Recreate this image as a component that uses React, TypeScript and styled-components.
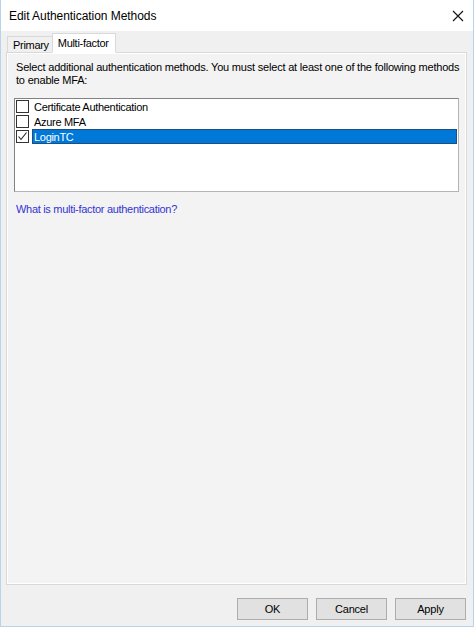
import React from "react";
import styled, { createGlobalStyle } from "styled-components";

const Global = createGlobalStyle`
  html, body { margin: 0; padding: 0; background: #ffffff; }
  body { font-family: "Liberation Sans", Arial, sans-serif; }
  #root { width: 474px; height: 627px; }
`;

const Window = styled.div`
  box-sizing: border-box;
  width: 474px;
  height: 627px;
  display: flex;
  flex-direction: column;
  background: #f0f0f0;
  border: 1px solid #b9d3ec;
  border-top: none;
  font-family: "Liberation Sans", Arial, sans-serif;
  color: #000;
`;

const TitleBar = styled.div`
  height: 31px;
  flex: none;
  background: #ffffff;
  display: flex;
  align-items: center;
  justify-content: space-between;
  padding: 1px 9px 0 8px;
  box-sizing: border-box;
`;

const Title = styled.span`
  font-size: 12px;
  color: #000;
  letter-spacing: -0.05px;
`;

const CloseBtn = styled.span`
  width: 12px;
  height: 12px;
  display: flex;
  align-items: center;
  justify-content: center;
`;

const Body = styled.div`
  flex: 1;
  display: flex;
  flex-direction: column;
  padding: 2px 6px 6px 5px;
  min-height: 0;
`;

const TabRow = styled.div`
  display: flex;
  align-items: flex-end;
  height: 20px;
  padding-left: 1px;
  position: relative;
  z-index: 1;
  margin-bottom: -1px;
`;

const Tab = styled.div<{ $active?: boolean }>`
  box-sizing: border-box;
  height: ${(p) => (p.$active ? "20px" : "17px")};
  padding: ${(p) => (p.$active ? "3px 6px 0 5px" : "2px 4px 0 5px")};
  font-size: 11px;
  letter-spacing: -0.3px;
  background: ${(p) => (p.$active ? "#ffffff" : "#f0f0f0")};
  border: 1px solid #d9d9d9;
  border-bottom: ${(p) => (p.$active ? "1px solid #ffffff" : "1px solid #d9d9d9")};
  margin-left: ${(p) => (p.$active ? "-1px" : "0")};
  ${(p) => (p.$active ? "" : "border-right: none;")}
`;

const Panel = styled.div`
  flex: 1;
  box-sizing: border-box;
  border: 1px solid #d9d9d9;
  background: #f3f3f3;
  box-shadow: inset 1px 1px 0 #ffffff, inset -1px -1px 0 #ffffff;
  padding: 8px 7px 0 7px;
  display: flex;
  flex-direction: column;
`;

const Description = styled.p`
  margin: 0 0 0 2px;
  font-size: 11px;
  line-height: 13px;
  letter-spacing: -0.2px;
  color: #000;
  white-space: nowrap;
`;

const ListBox = styled.div`
  margin-top: 11px;
  height: 94px;
  box-sizing: border-box;
  background: #ffffff;
  border: 1px solid #828282;
  border-right-color: #b4b4b4;
  border-bottom-color: #b4b4b4;
  padding: 0 1px 0 1px;
  display: flex;
  flex-direction: column;
`;

const Item = styled.div`
  height: 15px;
  display: flex;
  align-items: center;
  gap: 3px;
`;

const Box = styled.span`
  box-sizing: border-box;
  width: 13px;
  height: 13px;
  border: 1px solid #333333;
  background: #ffffff;
  display: flex;
  align-items: center;
  justify-content: center;
  flex: none;
`;

const Label = styled.span<{ $selected?: boolean }>`
  flex: 1;
  height: 15px;
  box-sizing: border-box;
  display: flex;
  align-items: center;
  padding-left: 1px;
  font-size: 11px;
  letter-spacing: -0.3px;
  color: ${(p) => (p.$selected ? "#ffffff" : "#000000")};
  background: ${(p) => (p.$selected ? "#0078d7" : "transparent")};
  border: 1px solid ${(p) => (p.$selected ? "#1e4f82" : "transparent")};
`;

const Link = styled.a`
  margin: 11px 0 0 2px;
  font-size: 11px;
  letter-spacing: -0.3px;
  color: #3434d4;
  text-decoration: none;
  cursor: pointer;
`;

const ButtonRow = styled.div`
  display: flex;
  justify-content: flex-end;
  gap: 8px;
  padding-top: 13px;
  padding-right: 1px;
`;

const Button = styled.button`
  box-sizing: border-box;
  width: 71px;
  height: 22px;
  background: #e1e1e1;
  border: 1px solid #adadad;
  font-family: "Liberation Sans", Arial, sans-serif;
  font-size: 11px;
  letter-spacing: -0.2px;
  color: #000;
  padding: 0;
`;

const Check = () => (
  <svg width="11" height="11" viewBox="0 0 11 11">
    <path d="M1.5 5.5 L4 8.5 L9.5 1.5" fill="none" stroke="#222" strokeWidth="1.1" />
  </svg>
);

const items = [
  { label: "Certificate Authentication", checked: false, selected: false },
  { label: "Azure MFA", checked: false, selected: false },
  { label: "LoginTC", checked: true, selected: true },
];

export default function App() {
  return (
    <>
      <Global />
      <Window>
        <TitleBar>
          <Title>Edit Authentication Methods</Title>
          <CloseBtn>
            <svg width="12" height="12" viewBox="0 0 12 12">
              <path d="M1 1 L11 11 M11 1 L1 11" stroke="#111" strokeWidth="1.1" />
            </svg>
          </CloseBtn>
        </TitleBar>
        <Body>
          <TabRow>
            <Tab>Primary</Tab>
            <Tab $active>Multi-factor</Tab>
          </TabRow>
          <Panel>
            <Description>
              Select additional authentication methods. You must select at least one of the following methods
              <br />
              to enable MFA:
            </Description>
            <ListBox>
              {items.map((it) => (
                <Item key={it.label}>
                  <Box>{it.checked && <Check />}</Box>
                  <Label $selected={it.selected}>{it.label}</Label>
                </Item>
              ))}
            </ListBox>
            <Link>What is multi-factor authentication?</Link>
          </Panel>
          <ButtonRow>
            <Button>OK</Button>
            <Button>Cancel</Button>
            <Button>Apply</Button>
          </ButtonRow>
        </Body>
      </Window>
    </>
  );
}
